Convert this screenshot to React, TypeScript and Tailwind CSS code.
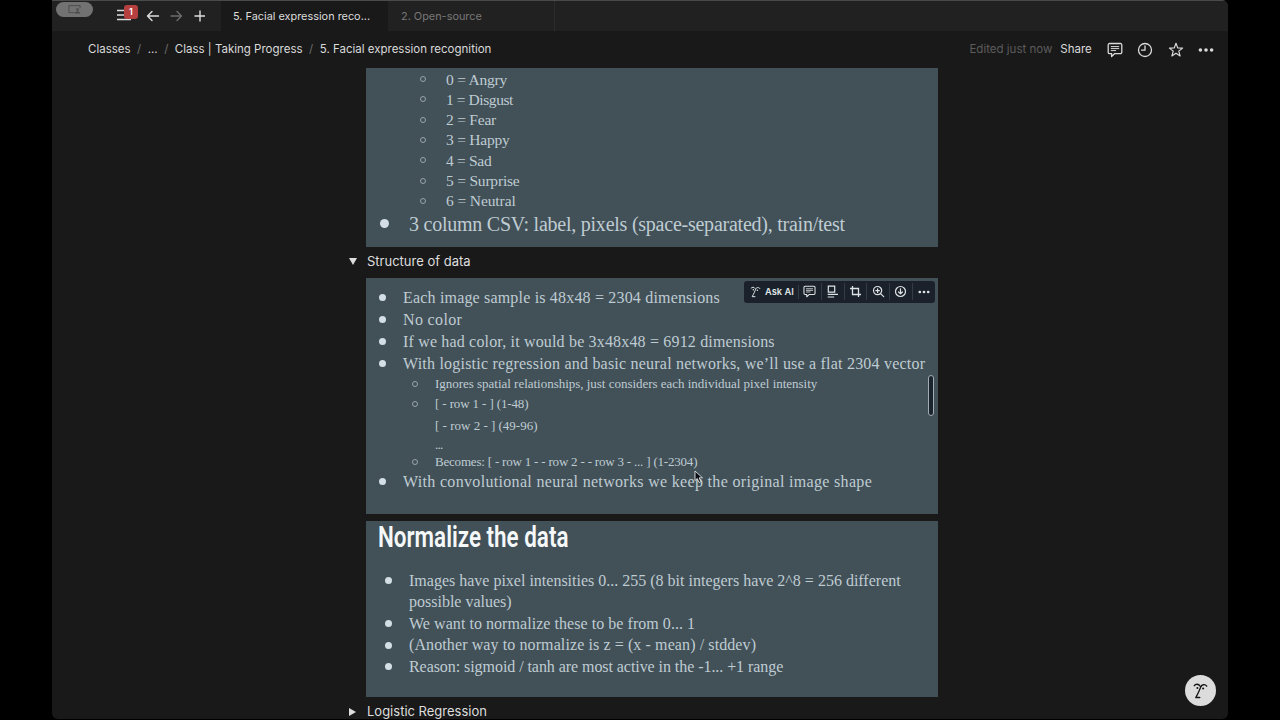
import clsx from "clsx";
import type { ReactNode } from "react";

type Line = {
  text: string;
  row: string;
  track: string;
  bullet?: "disc" | "circle";
};

const labels: Line[] = [
  { text: "0 = Angry", row: "h-[20.3px]", track: "tracking-[-0.22px]", bullet: "circle" },
  { text: "1 = Disgust", row: "h-[20.3px]", track: "tracking-[-0.42px]", bullet: "circle" },
  { text: "2 = Fear", row: "h-[20.3px]", track: "tracking-[-0.22px]", bullet: "circle" },
  { text: "3 = Happy", row: "h-[20.3px]", track: "tracking-[-0.22px]", bullet: "circle" },
  { text: "4 = Sad", row: "h-[20.3px]", track: "tracking-[-0.3px]", bullet: "circle" },
  { text: "5 = Surprise", row: "h-[20.3px]", track: "tracking-[-0.2px]", bullet: "circle" },
  { text: "6 = Neutral", row: "h-[20.3px]", track: "tracking-[-0.1px]", bullet: "circle" },
];

const structure: Line[] = [
  { text: "Each image sample is 48x48 = 2304 dimensions", row: "h-[22px]", track: "tracking-[0.18px]", bullet: "disc" },
  { text: "No color", row: "h-[22px]", track: "tracking-[0.35px]", bullet: "disc" },
  { text: "If we had color, it would be 3x48x48 = 6912 dimensions", row: "h-[22px]", track: "tracking-[0.17px]", bullet: "disc" },
  { text: "With logistic regression and basic neural networks, we’ll use a flat 2304 vector", row: "h-[22px]", track: "tracking-[0.21px]", bullet: "disc" },
];

const structureSub: Line[] = [
  { text: "Ignores spatial relationships, just considers each individual pixel intensity", row: "h-[18px]", track: "tracking-[-0.02px]", bullet: "circle" },
  { text: "[ - row 1 - ] (1-48)", row: "h-[22px]", track: "tracking-[-0.13px]", bullet: "circle" },
  { text: "[ - row 2 - ] (49-96)", row: "h-[22px]", track: "tracking-normal" },
  { text: "...", row: "h-[16px]", track: "tracking-[-0.8px]" },
  { text: "Becomes: [ - row 1 - - row 2 - - row 3 - ... ] (1-2304)", row: "h-[18px]", track: "tracking-[-0.2px]", bullet: "circle" },
];

const structureEnd: Line[] = [
  { text: "With convolutional neural networks we keep the original image shape", row: "h-[22px]", track: "tracking-[0.32px]", bullet: "disc" },
];

const normalize: Line[] = [
  { text: "Images have pixel intensities 0... 255 (8 bit integers have 2^8 = 256 different", row: "h-[21.5px]", track: "tracking-normal", bullet: "disc" },
  { text: "possible values)", row: "h-[21.5px]", track: "tracking-normal" },
  { text: "We want to normalize these to be from 0... 1", row: "h-[21.5px]", track: "tracking-[0.05px]", bullet: "disc" },
  { text: "(Another way to normalize is z = (x - mean) / stddev)", row: "h-[21.5px]", track: "tracking-[0.1px]", bullet: "disc" },
  { text: "Reason: sigmoid / tanh are most active in the -1... +1 range", row: "h-[21.5px]", track: "tracking-[-0.06px]", bullet: "disc" },
];

function Lines({ items, gutter, className }: { items: Line[]; gutter: string; className: string }) {
  return (
    <ul className={className}>
      {items.map((item) => (
        <li key={item.text} className={clsx("flex items-center whitespace-nowrap", item.row)}>
          <span className={clsx("flex shrink-0", gutter)}>
            {item.bullet === "disc" && <span className="size-[7px] rounded-full bg-[#d3dfe4]" />}
            {item.bullet === "circle" && (
              <span className="size-[6px] rounded-full border border-[#98a5ab]" />
            )}
          </span>
          <span className={item.track}>{item.text}</span>
        </li>
      ))}
    </ul>
  );
}

function Slide({ className, children }: { className: string; children: ReactNode }) {
  return (
    <div
      className={clsx(
        "relative ml-[314px] w-[572px] shrink-0 bg-[#425058] font-['Liberation_Serif',serif] text-[#bfccd2]",
        className
      )}
    >
      {children}
    </div>
  );
}

function CommentIcon({ className }: { className?: string }) {
  return (
    <svg viewBox="0 0 16 16" className={className} fill="none" stroke="currentColor" strokeWidth="1.3" strokeLinejoin="round" strokeLinecap="round">
      <path d="M2.6 1.5h10.8a1.4 1.4 0 0 1 1.4 1.4v7.3a1.4 1.4 0 0 1-1.4 1.4H7.8L4.6 14.5v-2.9h-2a1.4 1.4 0 0 1-1.4-1.4V2.9a1.4 1.4 0 0 1 1.4-1.4z" />
      <path d="M4.2 4.6h7.6M4.2 6.6h7.6M4.2 8.6h4.5" strokeWidth="1" />
    </svg>
  );
}

function ClockIcon() {
  return (
    <svg viewBox="0 0 16 16" className="size-4" fill="none" stroke="currentColor" strokeWidth="1.3" strokeLinecap="round" strokeLinejoin="round">
      <circle cx="8" cy="8" r="6.5" />
      <path d="M8 4v4.2H4.6" />
    </svg>
  );
}

function StarIcon() {
  return (
    <svg viewBox="0 0 16 16" className="size-4" fill="none" stroke="currentColor" strokeWidth="1.2" strokeLinejoin="round">
      <path d="M8 1.3l1.7 4.6 4.9.2-3.85 3.05 1.35 4.75L8 11.2l-4.1 2.7 1.35-4.75L1.4 6.1l4.9-.2z" />
    </svg>
  );
}

function DotsIcon({ className }: { className?: string }) {
  return (
    <svg viewBox="0 0 16 16" className={className} fill="currentColor">
      <circle cx="2.4" cy="8" r="1.8" />
      <circle cx="8" cy="8" r="1.8" />
      <circle cx="13.6" cy="8" r="1.8" />
    </svg>
  );
}

function FaceIcon({ className }: { className?: string }) {
  return (
    <svg viewBox="0 0 16 18" className={className} fill="none" stroke="currentColor" strokeWidth="1.5" strokeLinecap="round" strokeLinejoin="round">
      <path d="M1.4 3.3C2.8 1.2 6 1.2 7.4 3.7M14.6 3.8C12.8 1.3 9.4 2 8.3 4.6 7.2 7.6 5.500 11.5 3 16h4.200" />
      <circle cx="4.7" cy="5.7" r="1.1" fill="currentColor" stroke="none" />
      <circle cx="10.8" cy="6.3" r="1.1" fill="currentColor" stroke="none" />
    </svg>
  );
}

function TabBar() {
  return (
    <div className="flex h-[31px] shrink-0 border-t border-[#4a4a4a] bg-[#222121] text-[10.9px]">
      <div className="flex w-[169px] shrink-0 text-[#dedede]">
        <div className="mt-[1px] ml-[4px] flex h-[15px] w-[37px] items-center justify-center rounded-full bg-[#727272] text-[#4b4b4b]">
          <svg viewBox="0 0 14 10" className="h-[9px] w-[13px]" fill="none" stroke="currentColor">
            <path d="M7 8.5H.8V.7h12.4v3" />
            <circle cx="10.3" cy="5" r="1.5" fill="currentColor" stroke="none" />
            <path d="M7.4 9.5c0-3.5 5.8-3.5 5.800 0z" fill="currentColor" stroke="none" />
          </svg>
        </div>
        <div className="relative mt-[8px] ml-[24px] h-[14px] w-[20px]">
          <svg viewBox="0 0 14 12" className="h-[12px] w-[14px]" stroke="currentColor" strokeWidth="1.5">
            <path d="M0 1.5h14M0 6h14M0 10.5h14" />
          </svg>
          <span className="absolute -top-[4.5px] left-[7px] flex size-[14px] items-center justify-center rounded-[3px] bg-[#b5403f] text-[9px] font-semibold text-white">
            1
          </span>
        </div>
        <svg viewBox="0 0 60 14" className="mt-[7.5px] ml-[8px] h-[14px] w-[60px]" fill="none" stroke="currentColor" strokeWidth="1.4" strokeLinecap="round" strokeLinejoin="round">
          <path d="M13.5 7H2.5M7 2.5L2.5 7 7 11.5" />
          <path d="M26 7h10.5M32 2.5L36.5 7 32 11.5" stroke="#6b6b6b" />
          <path d="M55 2v10M50 7h10" />
        </svg>
      </div>
      <div className="flex w-[167px] items-center bg-[#191919] pl-[12px] text-[#dcdcdc]">
        5. Facial expression reco...
      </div>
      <div className="flex w-[167px] items-center border-r border-[#2c2c2c] pl-[13px] text-[#777]">
        2. Open-source
      </div>
    </div>
  );
}

function Header() {
  return (
    <div className="flex h-[37px] shrink-0 items-center pl-[36px] text-[11.5px] whitespace-nowrap text-[#dadada]">
      <span>Classes</span>
      <span className="mx-[6.5px] text-[#6c6c6c]">/</span>
      <span>...</span>
      <span className="mx-[6.5px] text-[#6c6c6c]">/</span>
      <span>Class | Taking Progress</span>
      <span className="mx-[6.5px] text-[#6c6c6c]">/</span>
      <span>5. Facial expression recognition</span>
      <div className="mr-[14px] ml-auto flex items-center">
        <span className="text-[#5c5c5c]">Edited just now</span>
        <span className="mr-[15px] ml-[8px]">Share</span>
        <div className="flex items-center gap-[14.4px]">
          <CommentIcon className="size-4" />
          <ClockIcon />
          <StarIcon />
          <DotsIcon className="size-4" />
        </div>
      </div>
    </div>
  );
}

function ImageToolbar() {
  return (
    <div className="absolute top-[3px] right-[3.5px] flex h-[21.5px] w-[190.500px] items-center divide-x divide-[#333c46] rounded-[3px] bg-[#1a212a] font-['Inter',sans-serif] text-[#dfe3e6]">
      <div className="flex w-[55px] shrink-0 items-center pl-[6px] text-[9.3px] font-semibold whitespace-nowrap">
        <FaceIcon className="mr-[4px] h-[12px] w-[11px] shrink-0" />
        Ask AI
      </div>
      <div className="flex h-[17px] flex-1 items-center justify-center">
        <CommentIcon className="size-[13px]" />
      </div>
      <div className="flex h-[17px] flex-1 items-center justify-center">
        <svg viewBox="0 0 13 13" className="size-[13px]" fill="none" stroke="currentColor" strokeWidth="1.2">
          <path d="M2.3 1.2h6.4v6H2.3zM1.7 9.3h10.3M1.700 12h6.5" />
        </svg>
      </div>
      <div className="flex h-[17px] flex-1 items-center justify-center">
        <svg viewBox="0 0 13 13" className="size-[13px]" fill="none" stroke="currentColor" strokeWidth="1.3">
          <path d="M3.5 1v8.5H12M1 3.5h8.5V12" />
        </svg>
      </div>
      <div className="flex h-[17px] flex-1 items-center justify-center">
        <svg viewBox="0 0 13 13" className="size-[13px]" fill="none" stroke="currentColor" strokeWidth="1.2" strokeLinecap="round">
          <circle cx="5.6" cy="5.6" r="4.1" />
          <path d="M8.8 8.8l2.9 2.9M5.6 3.8v3.6M3.8 5.6h3.6" />
        </svg>
      </div>
      <div className="flex h-[17px] flex-1 items-center justify-center">
        <svg viewBox="0 0 13 13" className="size-[13px]" fill="none" stroke="currentColor" strokeWidth="1.2" strokeLinecap="round" strokeLinejoin="round">
          <circle cx="6.5" cy="6.5" r="5" />
          <path d="M6.5 3.8v5M4.6 7l1.9 1.9L8.4 7" />
        </svg>
      </div>
      <div className="flex h-[17px] flex-1 items-center justify-center">
        <DotsIcon className="size-[12px]" />
      </div>
    </div>
  );
}

export default function App() {
  return (
    <div className="h-[720px] w-[1280px] overflow-hidden bg-black px-[52px] font-['Inter',sans-serif]">
      <div className="relative flex h-[719px] flex-col overflow-hidden rounded-tr-md rounded-b-md bg-[#191919]">
        <TabBar />
        <Header />

        <Slide className="h-[178.5px]">
          <Lines items={labels} gutter="w-[26px]" className="pt-[1px] pl-[54px] text-[15.5px]" />
          <div className="flex h-[25px] items-center whitespace-nowrap">
            <span className="mr-[20px] ml-[14px] size-[9px] rounded-full bg-[#d3dfe4]" />
            <span className="text-[20px] tracking-[-0.24px]">
              3 column CSV: label, pixels (space-separated), train/test
            </span>
          </div>
        </Slide>

        <div className="flex h-[31.5px] shrink-0 items-center pb-[2px] pl-[297px] text-[13px] text-[#dedede]">
          <svg viewBox="0 0 8 7" className="mr-[10px] h-[7px] w-[8px]" fill="currentColor">
            <path d="M0 0h8L4 7z" />
          </svg>
          Structure of data
        </div>

        <Slide className="h-[236px]">
          <Lines items={structure} gutter="w-[24.5px]" className="pt-[8.5px] pl-[12.5px] text-[16px]" />
          <Lines items={structureSub} gutter="w-[23px]" className="pl-[46px] text-[13px]" />
          <Lines items={structureEnd} gutter="w-[24.5px]" className="pl-[12.5px] text-[16px]" />
          <ImageToolbar />
          <div className="absolute top-[97px] right-[4px] h-[41px] w-[6px] rounded-[3px] border border-[#a2acb2] bg-[#1a242c]" />
          <svg viewBox="0 0 10 14" className="absolute top-[192px] left-[328px] h-[14px] w-[10px]">
            <path d="M1 1v9.500l2.300-2 1.700 4 1.900-.8-1.700-3.900H8.500z" fill="#0b0e12" stroke="#dfe5e8" strokeWidth=".9" />
          </svg>
        </Slide>

        <Slide className="mt-[6.5px] h-[176.5px]">
          <h2 className="flex h-[49.5px] items-start pl-[12px]">
            <span className="inline-block origin-left scale-x-[0.773] font-['Roboto',sans-serif] text-[29px] leading-[33px] font-semibold whitespace-nowrap text-[#f5f8f9]">
              Normalize the data
            </span>
          </h2>
          <Lines items={normalize} gutter="w-[24px]" className="pl-[19px] text-[16px]" />
        </Slide>

        <div className="flex h-[30px] shrink-0 items-center pl-[297px] text-[13px] text-[#dedede]">
          <svg viewBox="0 0 7 8" className="mr-[11px] h-[8px] w-[7px]" fill="currentColor">
            <path d="M0 0v8l7-4z" />
          </svg>
          Logistic Regression
        </div>

        <div className="absolute right-[12px] bottom-[13px] flex size-[31px] items-center justify-center rounded-full bg-[#dcdcdc] text-[#151515]">
          <FaceIcon className="h-[18px] w-[15px]" />
        </div>
      </div>
    </div>
  );
}
